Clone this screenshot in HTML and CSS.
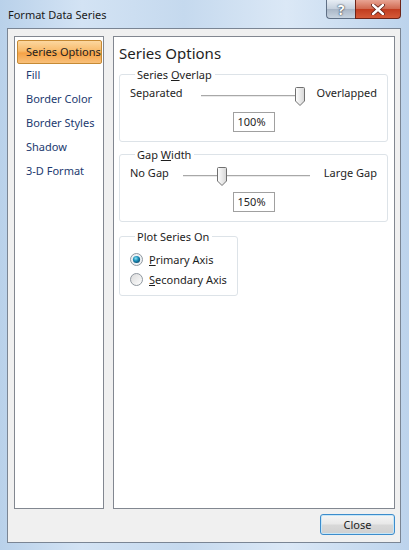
FILE: index.html
```html
<!DOCTYPE html>
<html lang="en">

<head>
    <meta charset="UTF-8">
    <title>Format Data Series</title>
    <link rel="stylesheet" href="styles.css">
</head>

<body>

    <div class="window">
        <div class="titlebar">
            <div class="title">Format Data Series</div>
            <div class="caption-buttons">
                <div class="help-btn">?</div>
                <div class="close-btn">
                    <svg width="14" height="11" viewBox="0 0 14 11">
                        <path d="M2 1 L12 10 M12 1 L2 10" stroke="#5a1a12" stroke-width="4" stroke-linecap="round" />
                        <path d="M2 1 L12 10 M12 1 L2 10" stroke="#ffffff" stroke-width="2.4" stroke-linecap="round" />
                    </svg>
                </div>
            </div>
        </div>

        <div class="client">
            <div class="panels">
                <div class="nav">
                    <div class="nav-item selected">Series Options</div>
                    <div class="nav-item">Fill</div>
                    <div class="nav-item">Border Color</div>
                    <div class="nav-item">Border Styles</div>
                    <div class="nav-item">Shadow</div>
                    <div class="nav-item">3-D Format</div>
                </div>

                <div class="content">
                    <div class="heading">Series Options</div>

                    <fieldset class="group">
                        <legend>Series <u>O</u>verlap</legend>
                        <div class="slider-row">
                            <span class="slider-label">Separated</span>
                            <div class="track overlap-track">
                                <div class="thumb" style="left: 94px;">
                                    <svg width="10" height="19" viewBox="0 0 10 19">
                                        <defs>
                                            <linearGradient id="tg1" x1="0" y1="0" x2="1" y2="0">
                                                <stop offset="0" stop-color="#ffffff" />
                                                <stop offset="1" stop-color="#d6d6d6" />
                                            </linearGradient>
                                        </defs>
                                        <path d="M1.5 0.5 H8.5 Q9.5 0.5 9.5 1.5 V14 L5 18.5 L0.5 14 V1.5 Q0.5 0.5 1.5 0.5 Z" fill="url(#tg1)" stroke="#707070" />
                                    </svg>
                                </div>
                            </div>
                            <span class="slider-label right">Overlapped</span>
                        </div>
                        <div class="value-row">
                            <div class="value-box">100%</div>
                        </div>
                    </fieldset>

                    <fieldset class="group">
                        <legend>Gap <u>W</u>idth</legend>
                        <div class="slider-row">
                            <span class="slider-label">No Gap</span>
                            <div class="track gap-track">
                                <div class="thumb" style="left: 34px;">
                                    <svg width="10" height="19" viewBox="0 0 10 19">
                                        <defs>
                                            <linearGradient id="tg2" x1="0" y1="0" x2="1" y2="0">
                                                <stop offset="0" stop-color="#ffffff" />
                                                <stop offset="1" stop-color="#d6d6d6" />
                                            </linearGradient>
                                        </defs>
                                        <path d="M1.5 0.5 H8.5 Q9.5 0.5 9.5 1.5 V14 L5 18.5 L0.5 14 V1.5 Q0.5 0.5 1.5 0.5 Z" fill="url(#tg2)" stroke="#707070" />
                                    </svg>
                                </div>
                            </div>
                            <span class="slider-label right">Large Gap</span>
                        </div>
                        <div class="value-row">
                            <div class="value-box">150%</div>
                        </div>
                    </fieldset>

                    <fieldset class="group plot-group">
                        <legend>Plot Series On</legend>
                        <div class="radio-row">
                            <svg width="13" height="13" viewBox="0 0 13 13">
                                <defs>
                                    <radialGradient id="dot" cx="0.4" cy="0.35" r="0.7">
                                        <stop offset="0" stop-color="#8fe3f5" />
                                        <stop offset="0.5" stop-color="#1b8fb8" />
                                        <stop offset="1" stop-color="#0c4a6e" />
                                    </radialGradient>
                                </defs>
                                <circle cx="6.5" cy="6.5" r="6" fill="#eef1f4" stroke="#8f979f" />
                                <circle cx="6.5" cy="6.5" r="3.6" fill="url(#dot)" />
                            </svg>
                            <span><u>P</u>rimary Axis</span>
                        </div>
                        <div class="radio-row">
                            <svg width="13" height="13" viewBox="0 0 13 13">
                                <defs>
                                    <linearGradient id="off" x1="0" y1="0" x2="1" y2="1">
                                        <stop offset="0" stop-color="#d9d9d9" />
                                        <stop offset="1" stop-color="#ffffff" />
                                    </linearGradient>
                                </defs>
                                <circle cx="6.5" cy="6.5" r="6" fill="url(#off)" stroke="#8f979f" />
                            </svg>
                            <span><u>S</u>econdary Axis</span>
                        </div>
                    </fieldset>
                </div>
            </div>

            <div class="footer">
                <div class="button">Close</div>
            </div>
        </div>
    </div>

</body>

</html>
```

FILE: styles.css
```css
* {
    margin: 0;
    padding: 0;
    box-sizing: border-box;
}

body {
    font-family: "Noto Sans", "Open Sans", sans-serif;
    font-size: 11px;
    color: #1e1e1e;
    background: #c9dcef;
}

.window {
    width: 409px;
    height: 550px;
    padding: 0 8px 7px 7px;
    display: flex;
    flex-direction: column;
    background: linear-gradient(90deg, #b9d1ea 0%, #d3e3f4 20%, #c5d9ee 45%, #dbe8f6 70%, #bcd3ec 100%);
}

.titlebar {
    height: 28px;
    display: flex;
    align-items: flex-start;
}

.title {
    padding: 7px 0 0 1px;
    font-size: 11px;
    color: #1a1a1a;
}

.caption-buttons {
    margin-left: auto;
    display: flex;
}

.help-btn,
.close-btn {
    height: 19px;
    display: flex;
    justify-content: center;
    align-items: center;
    border: 1px solid #5f6f85;
    border-top: none;
}

.help-btn {
    width: 29px;
    border-right: none;
    border-radius: 0 0 0 4px;
    background: linear-gradient(#e7edf4 0%, #c4cfdc 50%, #a9b6c6 51%, #c7d3e0 100%);
    color: #ffffff;
    font-size: 14px;
    font-weight: bold;
    text-shadow: 0 0 2px #2d3b4d, 0 0 1px #2d3b4d;
}

.close-btn {
    width: 46px;
    border-radius: 0 0 4px 0;
    border-color: #6d2418;
    background: linear-gradient(#e8a493 0%, #d0684f 50%, #c13c1f 51%, #d55a38 100%);
}

.client {
    flex: 1;
    display: flex;
    flex-direction: column;
    background: #f0f0f0;
    border: 1px solid #7a8594;
    padding: 7px 5px 0 6px;
}

.panels {
    height: 473px;
    display: flex;
    gap: 9px;
}

.nav {
    width: 90px;
    background: #ffffff;
    border: 1px solid #828790;
    padding: 3px 1px 0 2px;
}

.nav-item {
    height: 24px;
    padding-left: 9px;
    line-height: 22px;
    color: #1c3a70;
    white-space: nowrap;
}

.nav-item.selected {
    color: #1e1e1e;
    border: 1px solid #c68a34;
    border-radius: 2px;
    background: linear-gradient(#fcd79f 0%, #f8bb6c 45%, #f5a246 55%, #f8c07a 100%);
    padding-left: 8px;
}

.content {
    flex: 1;
    background: #ffffff;
    border: 1px solid #828790;
    padding: 6px 6px 0 5px;
}

.heading {
    font-size: 15px;
    line-height: 21px;
    margin-bottom: 3px;
}

.group {
    border: 1px solid #dde3e8;
    border-radius: 3px;
    padding: 0 10px 9px 10px;
    margin-bottom: 5px;
}

.group legend {
    margin-left: 5px;
    padding: 0 3px 0 2px;
    line-height: 15px;
}

.slider-row {
    height: 22px;
    display: flex;
    align-items: center;
    margin-top: 3px;
}

.slider-label {
    white-space: nowrap;
    margin-bottom: 8px;
}

.slider-label.right {
    margin-left: auto;
}

.track {
    position: relative;
    height: 2px;
    border-top: 1px solid #a8a8a8;
    border-bottom: 1px solid #eaeaea;
}

.overlap-track {
    width: 101px;
    margin-left: 18px;
}

.gap-track {
    width: 127px;
    margin-left: 14px;
}

.thumb {
    position: absolute;
    top: -9px;
    line-height: 0;
}

.value-row {
    display: flex;
    justify-content: center;
    margin-top: 5px;
}

.value-box {
    width: 42px;
    height: 20px;
    border: 1px solid #a0a0a0;
    background: #ffffff;
    padding-left: 4px;
    line-height: 18px;
}

.plot-group {
    width: 118px;
    margin-top: 7px;
    padding: 5px 10px 6px 10px;
}

.radio-row {
    height: 20px;
    display: flex;
    align-items: center;
    gap: 6px;
    white-space: nowrap;
}

.footer {
    display: flex;
    justify-content: flex-end;
    padding-top: 5px;
}

.button {
    width: 75px;
    height: 21px;
    border: 1px solid #3c8ccc;
    border-radius: 3px;
    background: linear-gradient(#f6f6f6 0%, #e8e8e8 48%, #d8d8d8 52%, #d0d0d0 100%);
    box-shadow: inset 0 0 0 1px #c7e6f7;
    text-align: center;
    line-height: 19px;
}
```
